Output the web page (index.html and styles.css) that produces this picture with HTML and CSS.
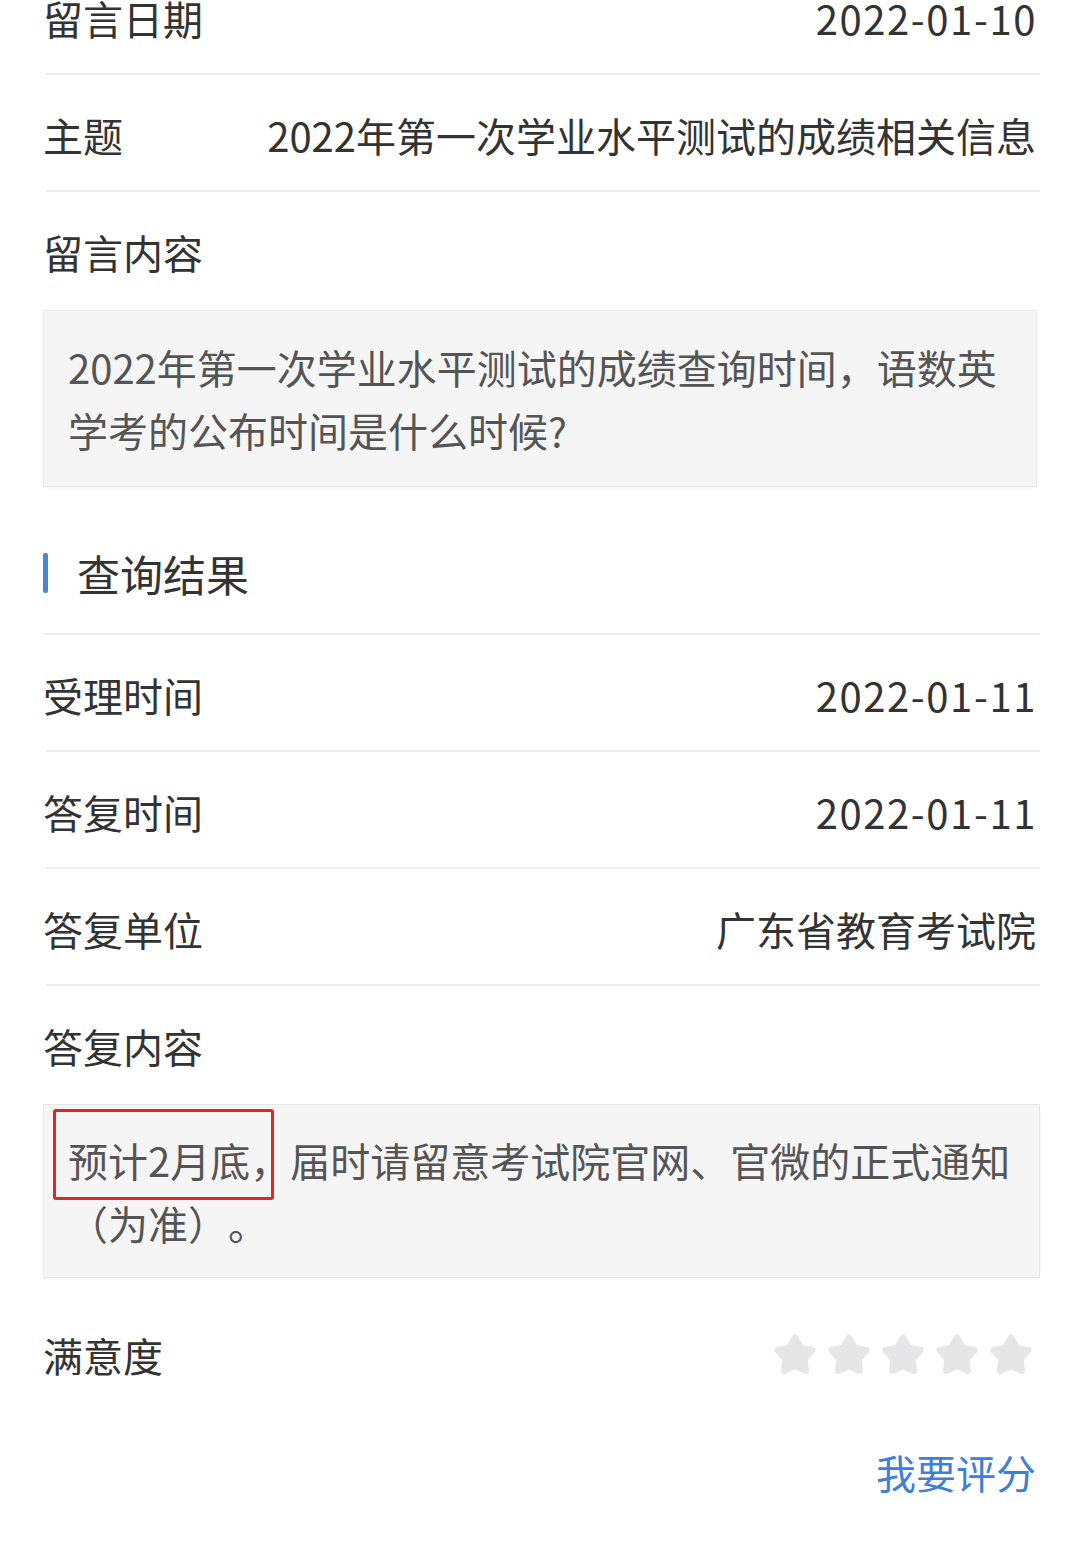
FILE: index.html
```html
<!DOCTYPE html>
<html lang="zh-CN">
<head>
<meta charset="utf-8">
<title>留言详情</title>
<link rel="stylesheet" href="styles.css">
</head>
<body>
<div class="page">
  <div class="row"><span class="label">留言日期</span><span class="value date">2022-01-10</span></div>
  <div class="row"><span class="label">主题</span><span class="value">2022年第一次学业水平测试的成绩相关信息</span></div>
  <div class="label-row"><span class="label">留言内容</span></div>
  <div class="box">2022年第一次学业水平测试的成绩查询时间，语数英学考的公布时间是什么时候?</div>

  <div class="section"><span class="bar"></span><span class="section-title">查询结果</span></div>
  <div class="row"><span class="label">受理时间</span><span class="value date">2022-01-11</span></div>
  <div class="row"><span class="label">答复时间</span><span class="value date">2022-01-11</span></div>
  <div class="row"><span class="label">答复单位</span><span class="value">广东省教育考试院</span></div>
  <div class="label-row"><span class="label">答复内容</span></div>
  <div class="box box-answer"><span class="marked">预计2月底，</span>届时请留意考试院官网、官微的正式通知（为准）。</div>

  <div class="rating-row">
    <span class="label">满意度</span>
    <div class="stars">
      <svg class="star" viewBox="0 0 24 24"><path d="M12 2.5 L15.2 8.1 L21.5 9.4 L17.2 14.2 L17.9 20.6 L12 18 L6.1 20.6 L6.8 14.2 L2.5 9.4 L8.8 8.1 Z"/></svg>
      <svg class="star" viewBox="0 0 24 24"><path d="M12 2.5 L15.2 8.1 L21.5 9.4 L17.2 14.2 L17.9 20.6 L12 18 L6.1 20.6 L6.8 14.2 L2.5 9.4 L8.8 8.1 Z"/></svg>
      <svg class="star" viewBox="0 0 24 24"><path d="M12 2.5 L15.2 8.1 L21.5 9.4 L17.2 14.2 L17.9 20.6 L12 18 L6.1 20.6 L6.8 14.2 L2.5 9.4 L8.8 8.1 Z"/></svg>
      <svg class="star" viewBox="0 0 24 24"><path d="M12 2.5 L15.2 8.1 L21.5 9.4 L17.2 14.2 L17.9 20.6 L12 18 L6.1 20.6 L6.8 14.2 L2.5 9.4 L8.8 8.1 Z"/></svg>
      <svg class="star" viewBox="0 0 24 24"><path d="M12 2.5 L15.2 8.1 L21.5 9.4 L17.2 14.2 L17.9 20.6 L12 18 L6.1 20.6 L6.8 14.2 L2.5 9.4 L8.8 8.1 Z"/></svg>
    </div>
  </div>
  <div class="link-row"><a class="rate-link">我要评分</a></div>
</div>
</body>
</html>
```

FILE: styles.css
```css
html, body {
  margin: 0;
  padding: 0;
  background: #ffffff;
}

body {
  font-family: "Noto Sans CJK SC", "Noto Sans", sans-serif;
  color: #333333;
  font-size: 40px;
  overflow: hidden;
  text-spacing-trim: space-all;
}

.page {
  margin-top: -42px;
  padding: 0 37px 0 43px;
}

.row {
  height: 117px;
  box-sizing: border-box;
  padding-top: 5px;
  border-bottom: 2px solid #eeeeee;
  margin-left: 3px;
  display: flex;
  align-items: center;
  justify-content: space-between;
  line-height: 50px;
}

.row .label {
  margin-left: -3px;
}

.label {
  flex-shrink: 0;
}

.value {
  text-align: right;
  padding-right: 4px;
}

.date {
  letter-spacing: 1.6px;
  padding-right: 3px;
}

.label-row {
  height: 118px;
  box-sizing: border-box;
  padding-top: 2px;
  display: flex;
  align-items: center;
  line-height: 50px;
}

.box {
  background: #f5f5f6;
  border: 1px solid #e9e9ea;
  box-shadow: 0 1px 2px rgba(0, 0, 0, 0.05);
  padding: 25px 24px 24px 24px;
  line-height: 63px;
  color: #555555;
  margin-right: 3px;
}

.box-answer {
  margin-right: 0;
  padding-top: 24px;
  padding-bottom: 22px;
}

.marked {
  position: relative;
  display: inline-block;
}

.marked::after {
  content: "";
  position: absolute;
  top: -20px;
  bottom: -8px;
  left: -15px;
  right: 16px;
  border: 3px solid #e3261e;
  border-radius: 3px;
}

.section {
  height: 148px;
  box-sizing: border-box;
  padding-top: 26px;
  border-bottom: 2px solid #eeeeee;
  display: flex;
  align-items: center;
}

.bar {
  width: 5px;
  height: 40px;
  border-radius: 2px;
  background: #4a86d6;
  margin-right: 29px;
}

.section-title {
  font-size: 43px;
  line-height: 56px;
  color: #333333;
}

.rating-row {
  margin-top: 19px;
  height: 116px;
  display: flex;
  align-items: center;
  justify-content: space-between;
}

.stars {
  display: flex;
  gap: 10px;
  margin-right: 7px;
}

.star {
  width: 44px;
  height: 44px;
  display: block;
}

.star path {
  fill: #e6e6e8;
  stroke: #e6e6e8;
  stroke-width: 3.5;
  stroke-linejoin: round;
}

.link-row {
  height: 118px;
  display: flex;
  align-items: center;
  justify-content: flex-end;
}

.rate-link {
  color: #3f80d6;
  line-height: 50px;
  padding-right: 4px;
}
```
